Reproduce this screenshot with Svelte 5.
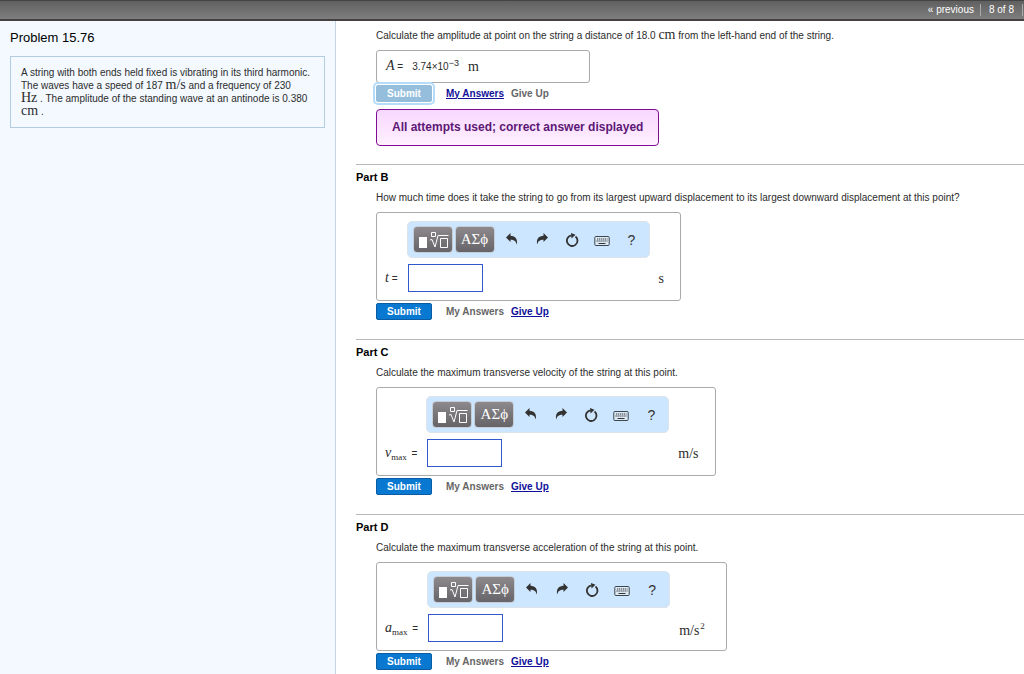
<script lang="ts">
	type Part = {
		id: string;
		title: string;
		question: string;
		symbol: string;
		sub?: string;
		unit: string;
		sup?: string;
	};

	const parts: Part[] = [
		{
			id: 'b',
			title: 'Part B',
			question:
				'How much time does it take the string to go from its largest upward displacement to its largest downward displacement at this point?',
			symbol: 't',
			unit: 's'
		},
		{
			id: 'c',
			title: 'Part C',
			question: 'Calculate the maximum transverse velocity of the string at this point.',
			symbol: 'v',
			sub: 'max',
			unit: 'm/s'
		},
		{
			id: 'd',
			title: 'Part D',
			question: 'Calculate the maximum transverse acceleration of the string at this point.',
			symbol: 'a',
			sub: 'max',
			unit: 'm/s',
			sup: '2'
		}
	];

	let answers = $state<Record<string, string>>({ b: '', c: '', d: '' });
</script>

<div class="page">
	<nav class="topbar">
		<a href="#previous">« previous</a>
		<span class="count">8 of 8</span>
	</nav>

	<div class="columns">
		<aside>
			<h1>Problem 15.76</h1>
			<p class="intro">
				A string with both ends held fixed is vibrating in its third harmonic. The waves have a speed of
				187 <span class="math">m/s</span> and a frequency of 230 <span class="math">Hz</span>&nbsp;. The
				amplitude of the standing wave at an antinode is 0.380 <span class="math">cm</span>&nbsp;.
			</p>
		</aside>

		<main>
			<section class="part first">
				<p class="question">
					Calculate the amplitude at point on the string a distance of 18.0
					<span class="math">cm</span> from the left-hand end of the string.
				</p>
				<div class="answer given">
					<span><i class="math">A</i> =</span>
					<span>3.74×10<sup>−3</sup></span>
					<span class="math">m</span>
				</div>
				<div class="actions">
					<button class="submit used" type="button">Submit</button>
					<a href="#answers-a">My Answers</a>
					<span>Give Up</span>
				</div>
				<p class="notice">All attempts used; correct answer displayed</p>
			</section>

			{#each parts as part (part.id)}
				<section class="part">
					<h2>{part.title}</h2>
					<p class="question">{part.question}</p>
					<div class="answer entry">
						<div class="toolbar">
							<button class="palette" type="button" aria-label="Templates">
								<svg width="32" height="22" viewBox="0 0 32 22">
									<rect x="2" y="8" width="8" height="11" fill="#fff" />
									<g fill="none" stroke="#fff">
										<path d="M14.500 3.500h4v4h-4z" />
										<path d="M13 11l2-.5 3 7.500 3-11.500h10.500" />
										<path d="M23.500 9.500h7v9h-7z" />
									</g>
								</svg>
							</button>
							<button class="palette" type="button">ΑΣϕ</button>
							<button class="tool" type="button" aria-label="Undo">
								<svg width="14" height="14" viewBox="0 0 14 14">
									<path d="M1 4.500L5.500 0v2.800c4.500.2 7.500 3 6.300 8.700-.8-3.300-2.400-4.700-6.300-4.800V9z" />
								</svg>
							</button>
							<button class="tool" type="button" aria-label="Redo">
								<svg width="14" height="14" viewBox="0 0 14 14">
									<path d="M13 4.500L8.500 0v2.800c-4.500.2-7.500 3-6.300 8.700.8-3.300 2.400-4.700 6.300-4.800V9z" />
								</svg>
							</button>
							<button class="tool" type="button" aria-label="Reset">
								<svg width="14" height="14" viewBox="0 0 14 14">
									<path
										d="M10.500 3.500A5.300 5.300 0 1 1 6.500 2.400"
										fill="none"
										stroke="#333"
										stroke-width="1.800"
									/>
									<path d="M6 0l4.500 1.800L6.500 5.500z" />
								</svg>
							</button>
							<button class="tool" type="button" aria-label="Keyboard shortcuts">
								<svg width="16" height="14" viewBox="0 0 16 14">
									<rect x=".8" y="3.500" width="14.400" height="9" rx="1" fill="#dceaf6" stroke="#3c464e" />
									<path
										d="M3 6h10.500M2.500 8h11"
										stroke="#333"
										stroke-width="1.200"
										stroke-dasharray="1.300 .7"
									/>
									<path d="M4.500 10.500h7" stroke="#333" />
								</svg>
							</button>
							<button class="tool help" type="button">?</button>
						</div>
						<label for="answer-{part.id}">
							<i class="math">{part.symbol}</i>{#if part.sub}<sub>{part.sub}</sub>{/if} =
						</label>
						<input id="answer-{part.id}" type="text" bind:value={answers[part.id]} />
						<span class="math">{part.unit}{#if part.sup}<sup>{part.sup}</sup>{/if}</span>
					</div>
					<div class="actions">
						<button class="submit" type="button">Submit</button>
						<span>My Answers</span>
						<a href="#give-up-{part.id}">Give Up</a>
					</div>
				</section>
			{/each}
		</main>
	</div>
</div>

<style>
	:global(body) {
		margin: 0;
		background: #ffffff;
	}

	.page {
		display: flex;
		flex-direction: column;
		height: 100vh;
		overflow: hidden;
		color: #2c2c2c;
		font-family: 'Liberation Sans', Arial, sans-serif;
		font-size: 10px;
	}

	.topbar {
		display: flex;
		flex: none;
		justify-content: flex-end;
		align-items: center;
		box-sizing: border-box;
		height: 21px;
		border-top: 1px solid #444444;
		border-bottom: 2px solid #443f40;
		background: linear-gradient(#606060, #7e7e7e);
		color: #ffffff;
		line-height: 12px;
	}

	.topbar a {
		padding-right: 6px;
		color: #ffffff;
		text-decoration: none;
	}

	.count {
		padding: 0 8px;
		border: solid #aaaaaa;
		border-width: 0 1px;
		margin-right: 1px;
	}

	.columns {
		display: flex;
		flex: 1;
		min-height: 0;
	}

	aside {
		flex: none;
		box-sizing: border-box;
		width: 336px;
		padding: 9px 10px;
		border-right: 1px solid #c3d5e4;
		background: #f3f9ff;
	}

	h1,
	h2,
	p {
		margin: 0;
	}

	h1 {
		margin-bottom: 10px;
		color: #000000;
		font-size: 13px;
		font-weight: 400;
		line-height: 16px;
	}

	.intro {
		padding: 9px 12px 9px 10px;
		border: 1px solid #b4cce0;
		line-height: 13px;
	}

	.math {
		font-family: 'Liberation Serif', 'Times New Roman', serif;
		font-size: 14px;
		line-height: 1px;
	}

	sup,
	sub {
		font-size: 9px;
		line-height: 1px;
	}

	main {
		flex: 1;
		min-width: 0;
		overflow: hidden;
		padding-left: 20px;
	}

	.part {
		padding: 5px 0 19px 20px;
		border-top: 1px solid #b8b8b8;
	}

	.first {
		padding: 8px 0 18px 20px;
		border-top: 0;
	}

	h2 {
		margin: 0 0 7px -20px;
		color: #000000;
		font-size: 11px;
		line-height: 14px;
	}

	.question {
		line-height: 14px;
		margin-bottom: 7px;
	}

	.answer {
		box-sizing: border-box;
		width: max-content;
		border: 1px solid #aaaaaa;
		border-radius: 3px;
	}

	.given {
		display: flex;
		align-items: center;
		gap: 9px;
		width: 214px;
		height: 33px;
		padding: 0 9px;
	}

	.entry {
		display: grid;
		grid-template-columns: auto 243px auto;
		column-gap: 9px;
		row-gap: 6px;
		align-items: center;
		padding: 8px 16px 8px 8px;
	}

	label {
		grid-column: 1;
	}

	.entry sup {
		margin: 0 5px 0 1px;
	}

	sub {
		margin-right: 2px;
		font-family: 'Liberation Serif', 'Times New Roman', serif;
	}

	.toolbar {
		display: flex;
		grid-column: 2;
		align-items: center;
		box-sizing: border-box;
		height: 37px;
		padding-left: 5px;
		border: 1px solid #dce3ea;
		border-radius: 5px;
		background: #cce6ff;
	}

	.toolbar button {
		display: grid;
		place-items: center;
		padding: 0;
	}

	.toolbar .palette {
		width: 40px;
		height: 27px;
		margin-right: 2px;
		border: 1px solid #c4ccd6;
		border-radius: 4px;
		background: linear-gradient(#8d898d, #666468);
		color: #ffffff;
		font-family: 'Liberation Serif', 'Times New Roman', serif;
		font-size: 15px;
	}

	.tool {
		width: 30px;
		height: 26px;
		border: 0;
		background: none;
		color: #333333;
		fill: #333333;
	}

	.help {
		font-family: 'Liberation Sans', Arial, sans-serif;
		font-size: 14px;
	}

	input {
		grid-column: 2;
		box-sizing: border-box;
		width: 75px;
		height: 28px;
		margin-left: 1px;
		border: 1px solid #3357cc;
		background: #ffffff;
		font: inherit;
	}

	.actions {
		display: flex;
		align-items: center;
		margin-top: 2px;
		height: 17px;
		color: #666666;
		font-weight: 700;
		line-height: 12px;
	}

	.actions > :nth-child(2) {
		margin: 0 7px 0 14px;
	}

	.actions a {
		color: #10109a;
	}

	.submit {
		box-sizing: border-box;
		width: 56px;
		height: 17px;
		padding: 0;
		border: 1px solid #0b5ca5;
		border-radius: 2px;
		background: #0878d1;
		color: #ffffff;
		font: 700 10px/13px 'Liberation Sans', Arial, sans-serif;
	}

	.used {
		border-color: #94bedb;
		background: #94bedb;
		box-shadow:
			0 0 0 1px #ffffff,
			0 0 0 3px #b5dcfb;
	}

	.notice {
		box-sizing: border-box;
		width: max-content;
		margin-top: 7px;
		padding: 9px 15px;
		border: 1px solid #800d91;
		border-radius: 4px;
		background: linear-gradient(#f7d7ff, #fff0ff);
		color: #5d1775;
		font-size: 12px;
		font-weight: 700;
		line-height: 17px;
	}
</style>
